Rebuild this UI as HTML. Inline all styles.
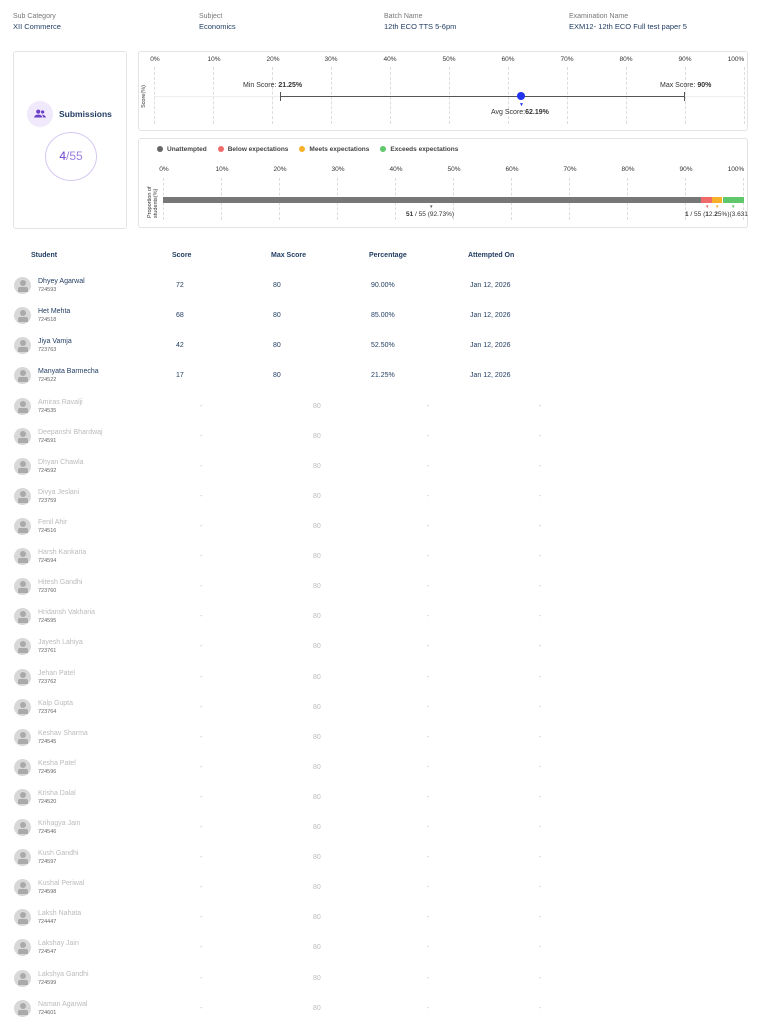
<!DOCTYPE html>
<html><head><meta charset="utf-8"><style>
*{margin:0;padding:0;box-sizing:border-box}
body{width:768px;height:1024px;background:#fff;font-family:"Liberation Sans",sans-serif;position:relative;overflow:hidden;color:#1e3550}
.a{position:absolute;white-space:nowrap}
.lbl{font-size:7px;color:#777}
.val{font-size:7.5px;color:#1e3a5f}
.card{position:absolute;border:1px solid #e3e3e3;border-radius:3px;background:#fff}
.tk{font-size:6.5px;color:#333;transform:translateX(-50%)}
.gl{position:absolute;width:0;border-left:1px dashed #ddd}
.hd{font-size:7px;font-weight:bold;color:#1e3a5f}
.row{position:absolute;left:0;width:768px;height:30px}
.av{position:absolute;left:14px;top:6px;width:17px;height:17px;border-radius:50%;background:#d8d8d8;overflow:hidden}
.av:before{content:"";position:absolute;left:5.5px;top:3px;width:6px;height:6px;border-radius:50%;background:#aaa}
.av:after{content:"";position:absolute;left:3.5px;top:10px;width:10px;height:5px;border-radius:2px 2px 0 0;background:#aaa}
.nm{position:absolute;left:38px;top:7px;font-size:7px;color:#1e3a5f}
.id{position:absolute;left:38px;top:16px;font-size:5.5px;color:#666}
.c{position:absolute;top:11px;font-size:7px;color:#1e3a5f}
.u .nm{color:#bbb}
.u .c{color:#bbb}
</style></head><body>
<div class="a lbl" style="left:13px;top:13px">Sub Category</div>
<div class="a val" style="left:13px;top:22px">XII Commerce</div>
<div class="a lbl" style="left:199px;top:13px">Subject</div>
<div class="a val" style="left:199px;top:22px">Economics</div>
<div class="a lbl" style="left:384px;top:13px">Batch Name</div>
<div class="a val" style="left:384px;top:22px">12th ECO TTS 5-6pm</div>
<div class="a lbl" style="left:569px;top:13px">Examination Name</div>
<div class="a val" style="left:569px;top:22px">EXM12- 12th ECO Full test paper 5</div>

<div class="card" style="left:13px;top:51px;width:114px;height:178px">
  <div style="position:absolute;left:13px;top:49px;width:26px;height:26px;border-radius:50%;background:#efe9fb"></div>
  <svg style="position:absolute;left:19px;top:55px" width="14" height="14" viewBox="0 0 24 24"><circle cx="9" cy="8" r="3.5" fill="#6b3fc8"/><circle cx="16.5" cy="8.5" r="2.8" fill="#6b3fc8"/><path d="M2 18c0-3.5 3.5-5 7-5s7 1.5 7 5z" fill="#6b3fc8"/><path d="M15 13.2c3 0 7 1.2 7 4.8h-4.5c0-2-1-3.6-2.5-4.8z" fill="#6b3fc8"/></svg>
  <div class="a" style="left:45px;top:57px;font-size:8.5px;font-weight:bold;color:#1e3a5f">Submissions</div>
  <div style="position:absolute;left:31px;top:80px;width:52px;height:49px;border-radius:50%;border:1px solid #d6c8f3"></div>
  <div class="a" style="left:31px;top:97px;width:52px;text-align:center;font-size:12px;color:#6b3fc8">4<span style="color:#9b7fe0">/55</span></div>
</div>

<div class="card" style="left:138px;top:51px;width:610px;height:80px"></div>
<div class="a" style="left:141px;top:108px;font-size:5.5px;color:#333;transform:rotate(-90deg);transform-origin:0 0">Score(%)</div>
<div class="a tk" style="left:155px;top:56px">0%</div><div class="a tk" style="left:214px;top:56px">10%</div><div class="a tk" style="left:273px;top:56px">20%</div><div class="a tk" style="left:331px;top:56px">30%</div><div class="a tk" style="left:390px;top:56px">40%</div><div class="a tk" style="left:449px;top:56px">50%</div><div class="a tk" style="left:508px;top:56px">60%</div><div class="a tk" style="left:567px;top:56px">70%</div><div class="a tk" style="left:626px;top:56px">80%</div><div class="a tk" style="left:685px;top:56px">90%</div><div class="a tk" style="left:736px;top:56px">100%</div>
<div class="gl" style="left:154px;top:67px;height:57px"></div><div class="gl" style="left:213px;top:67px;height:57px"></div><div class="gl" style="left:272px;top:67px;height:57px"></div><div class="gl" style="left:331px;top:67px;height:57px"></div><div class="gl" style="left:390px;top:67px;height:57px"></div><div class="gl" style="left:449px;top:67px;height:57px"></div><div class="gl" style="left:508px;top:67px;height:57px"></div><div class="gl" style="left:567px;top:67px;height:57px"></div><div class="gl" style="left:626px;top:67px;height:57px"></div><div class="gl" style="left:685px;top:67px;height:57px"></div><div class="gl" style="left:744px;top:67px;height:57px"></div>
<div style="position:absolute;left:154px;top:96px;width:590px;height:1px;background:#eee"></div>
<div style="position:absolute;left:280px;top:96px;width:405px;height:1px;background:#555"></div>
<div style="position:absolute;left:280px;top:92px;width:1px;height:9px;background:#555"></div>
<div style="position:absolute;left:684px;top:92px;width:1px;height:9px;background:#555"></div>
<div style="position:absolute;left:517px;top:92px;width:8px;height:8px;border-radius:50%;background:#2233ee"></div>
<div class="a" style="left:519px;top:102px;font-size:5px;color:#2233ee">▼</div>
<div class="a" style="left:243px;top:82px;font-size:7px;color:#333">Min Score: <b>21.25%</b></div>
<div class="a" style="left:660px;top:82px;font-size:7px;color:#333">Max Score: <b>90%</b></div>
<div class="a" style="left:491px;top:109px;font-size:7px;color:#333">Avg Score:<b>62.19%</b></div>

<div class="card" style="left:138px;top:138px;width:610px;height:90px"></div>
<div class="a" style="left:157px;top:146px;font-size:6.5px;font-weight:bold;color:#444"><span style="display:inline-block;width:6px;height:6px;border-radius:50%;background:#666;vertical-align:-1px;margin-right:4px"></span>Unattempted<span style="display:inline-block;width:6px;height:6px;border-radius:50%;background:#f06a6a;vertical-align:-1px;margin:0 4px 0 11px"></span>Below expectations<span style="display:inline-block;width:6px;height:6px;border-radius:50%;background:#f8b02a;vertical-align:-1px;margin:0 4px 0 11px"></span>Meets expectations<span style="display:inline-block;width:6px;height:6px;border-radius:50%;background:#5ec86a;vertical-align:-1px;margin:0 4px 0 11px"></span>Exceeds expectations</div>
<div class="a" style="left:147px;top:218px;font-size:5.5px;color:#333;line-height:6px;transform:rotate(-90deg);transform-origin:0 0">Proportion of<br>students(%)</div>
<div class="a tk" style="left:164px;top:166px">0%</div><div class="a tk" style="left:222px;top:166px">10%</div><div class="a tk" style="left:280px;top:166px">20%</div><div class="a tk" style="left:338px;top:166px">30%</div><div class="a tk" style="left:396px;top:166px">40%</div><div class="a tk" style="left:454px;top:166px">50%</div><div class="a tk" style="left:512px;top:166px">60%</div><div class="a tk" style="left:570px;top:166px">70%</div><div class="a tk" style="left:628px;top:166px">80%</div><div class="a tk" style="left:686px;top:166px">90%</div><div class="a tk" style="left:736px;top:166px">100%</div>
<div class="gl" style="left:163px;top:178px;height:42px"></div><div class="gl" style="left:221px;top:178px;height:42px"></div><div class="gl" style="left:279px;top:178px;height:42px"></div><div class="gl" style="left:337px;top:178px;height:42px"></div><div class="gl" style="left:395px;top:178px;height:42px"></div><div class="gl" style="left:453px;top:178px;height:42px"></div><div class="gl" style="left:511px;top:178px;height:42px"></div><div class="gl" style="left:569px;top:178px;height:42px"></div><div class="gl" style="left:627px;top:178px;height:42px"></div><div class="gl" style="left:685px;top:178px;height:42px"></div><div class="gl" style="left:743px;top:178px;height:42px"></div>
<div style="position:absolute;left:163px;top:197px;width:538px;height:6px;background:#777"></div>
<div style="position:absolute;left:701px;top:197px;width:11px;height:6px;background:#f06a6a"></div>
<div style="position:absolute;left:712px;top:197px;width:10px;height:6px;background:#f8b02a"></div>
<div style="position:absolute;left:723px;top:197px;width:21px;height:6px;background:#5ec86a"></div>
<div class="a" style="left:429px;top:204px;font-size:4.5px;color:#666">▼</div>
<div class="a" style="left:705px;top:204px;font-size:4.5px;color:#f06a6a">▼</div>
<div class="a" style="left:715px;top:204px;font-size:4.5px;color:#f8b02a">▼</div>
<div class="a" style="left:731px;top:204px;font-size:4.5px;color:#5ec86a">▼</div>
<div class="a" style="left:406px;top:211px;font-size:6.5px;color:#333"><b>51</b> / 55 (92.73%)</div>
<div class="a" style="left:685px;top:211px;font-size:6.5px;color:#333"><b>1</b> / 55 (<b>1</b>2.<b>2</b>5%)(3.631</div>

<div class="a hd" style="left:31px;top:252px">Student</div>
<div class="a hd" style="left:172px;top:252px">Score</div>
<div class="a hd" style="left:271px;top:252px">Max Score</div>
<div class="a hd" style="left:369px;top:252px">Percentage</div>
<div class="a hd" style="left:468px;top:252px">Attempted On</div>

<div class="row" style="top:271px"><div class="av"></div><div class="nm">Dhyey Agarwal</div><div class="id">724593</div><div class="c" style="left:176px">72</div><div class="c" style="left:273px">80</div><div class="c" style="left:371px">90.00%</div><div class="c" style="left:470px">Jan 12, 2026</div></div>
<div class="row" style="top:301px"><div class="av"></div><div class="nm">Het Mehta</div><div class="id">724518</div><div class="c" style="left:176px">68</div><div class="c" style="left:273px">80</div><div class="c" style="left:371px">85.00%</div><div class="c" style="left:470px">Jan 12, 2026</div></div>
<div class="row" style="top:331px"><div class="av"></div><div class="nm">Jiya Vamja</div><div class="id">723763</div><div class="c" style="left:176px">42</div><div class="c" style="left:273px">80</div><div class="c" style="left:371px">52.50%</div><div class="c" style="left:470px">Jan 12, 2026</div></div>
<div class="row" style="top:361px"><div class="av"></div><div class="nm">Manyata Barmecha</div><div class="id">724522</div><div class="c" style="left:176px">17</div><div class="c" style="left:273px">80</div><div class="c" style="left:371px">21.25%</div><div class="c" style="left:470px">Jan 12, 2026</div></div>

<div class="row u" style="top:392px"><div class="av"></div><div class="nm">Amiras Ravalji</div><div class="id">724535</div><div class="c" style="left:200px">-</div><div class="c" style="left:313px">80</div><div class="c" style="left:427px">-</div><div class="c" style="left:539px">-</div></div>
<div class="row u" style="top:422px"><div class="av"></div><div class="nm">Deepanshi Bhardwaj</div><div class="id">724591</div><div class="c" style="left:200px">-</div><div class="c" style="left:313px">80</div><div class="c" style="left:427px">-</div><div class="c" style="left:539px">-</div></div>
<div class="row u" style="top:452px"><div class="av"></div><div class="nm">Dhyan Chawla</div><div class="id">724592</div><div class="c" style="left:200px">-</div><div class="c" style="left:313px">80</div><div class="c" style="left:427px">-</div><div class="c" style="left:539px">-</div></div>
<div class="row u" style="top:482px"><div class="av"></div><div class="nm">Divya Jeslani</div><div class="id">723759</div><div class="c" style="left:200px">-</div><div class="c" style="left:313px">80</div><div class="c" style="left:427px">-</div><div class="c" style="left:539px">-</div></div>
<div class="row u" style="top:512px"><div class="av"></div><div class="nm">Fenil Ahir</div><div class="id">724516</div><div class="c" style="left:200px">-</div><div class="c" style="left:313px">80</div><div class="c" style="left:427px">-</div><div class="c" style="left:539px">-</div></div>
<div class="row u" style="top:542px"><div class="av"></div><div class="nm">Harsh Kankaria</div><div class="id">724594</div><div class="c" style="left:200px">-</div><div class="c" style="left:313px">80</div><div class="c" style="left:427px">-</div><div class="c" style="left:539px">-</div></div>
<div class="row u" style="top:572px"><div class="av"></div><div class="nm">Hitesh Gandhi</div><div class="id">723760</div><div class="c" style="left:200px">-</div><div class="c" style="left:313px">80</div><div class="c" style="left:427px">-</div><div class="c" style="left:539px">-</div></div>
<div class="row u" style="top:602px"><div class="av"></div><div class="nm">Hridansh Vakharia</div><div class="id">724595</div><div class="c" style="left:200px">-</div><div class="c" style="left:313px">80</div><div class="c" style="left:427px">-</div><div class="c" style="left:539px">-</div></div>
<div class="row u" style="top:632px"><div class="av"></div><div class="nm">Jayesh Lahiya</div><div class="id">723761</div><div class="c" style="left:200px">-</div><div class="c" style="left:313px">80</div><div class="c" style="left:427px">-</div><div class="c" style="left:539px">-</div></div>
<div class="row u" style="top:663px"><div class="av"></div><div class="nm">Jehan Patel</div><div class="id">723762</div><div class="c" style="left:200px">-</div><div class="c" style="left:313px">80</div><div class="c" style="left:427px">-</div><div class="c" style="left:539px">-</div></div>
<div class="row u" style="top:693px"><div class="av"></div><div class="nm">Kalp Gupta</div><div class="id">723764</div><div class="c" style="left:200px">-</div><div class="c" style="left:313px">80</div><div class="c" style="left:427px">-</div><div class="c" style="left:539px">-</div></div>
<div class="row u" style="top:723px"><div class="av"></div><div class="nm">Keshav Sharma</div><div class="id">724545</div><div class="c" style="left:200px">-</div><div class="c" style="left:313px">80</div><div class="c" style="left:427px">-</div><div class="c" style="left:539px">-</div></div>
<div class="row u" style="top:753px"><div class="av"></div><div class="nm">Kesha Patel</div><div class="id">724596</div><div class="c" style="left:200px">-</div><div class="c" style="left:313px">80</div><div class="c" style="left:427px">-</div><div class="c" style="left:539px">-</div></div>
<div class="row u" style="top:783px"><div class="av"></div><div class="nm">Krisha Dalal</div><div class="id">724520</div><div class="c" style="left:200px">-</div><div class="c" style="left:313px">80</div><div class="c" style="left:427px">-</div><div class="c" style="left:539px">-</div></div>
<div class="row u" style="top:813px"><div class="av"></div><div class="nm">Krihagya Jain</div><div class="id">724546</div><div class="c" style="left:200px">-</div><div class="c" style="left:313px">80</div><div class="c" style="left:427px">-</div><div class="c" style="left:539px">-</div></div>
<div class="row u" style="top:843px"><div class="av"></div><div class="nm">Kush Gandhi</div><div class="id">724597</div><div class="c" style="left:200px">-</div><div class="c" style="left:313px">80</div><div class="c" style="left:427px">-</div><div class="c" style="left:539px">-</div></div>
<div class="row u" style="top:873px"><div class="av"></div><div class="nm">Kushal Periwal</div><div class="id">724598</div><div class="c" style="left:200px">-</div><div class="c" style="left:313px">80</div><div class="c" style="left:427px">-</div><div class="c" style="left:539px">-</div></div>
<div class="row u" style="top:903px"><div class="av"></div><div class="nm">Laksh Nahata</div><div class="id">724447</div><div class="c" style="left:200px">-</div><div class="c" style="left:313px">80</div><div class="c" style="left:427px">-</div><div class="c" style="left:539px">-</div></div>
<div class="row u" style="top:933px"><div class="av"></div><div class="nm">Lakshay Jain</div><div class="id">724547</div><div class="c" style="left:200px">-</div><div class="c" style="left:313px">80</div><div class="c" style="left:427px">-</div><div class="c" style="left:539px">-</div></div>
<div class="row u" style="top:964px"><div class="av"></div><div class="nm">Lakshya Gandhi</div><div class="id">724599</div><div class="c" style="left:200px">-</div><div class="c" style="left:313px">80</div><div class="c" style="left:427px">-</div><div class="c" style="left:539px">-</div></div>
<div class="row u" style="top:994px"><div class="av"></div><div class="nm">Naman Agarwal</div><div class="id">724601</div><div class="c" style="left:200px">-</div><div class="c" style="left:313px">80</div><div class="c" style="left:427px">-</div><div class="c" style="left:539px">-</div></div>
</body></html>
